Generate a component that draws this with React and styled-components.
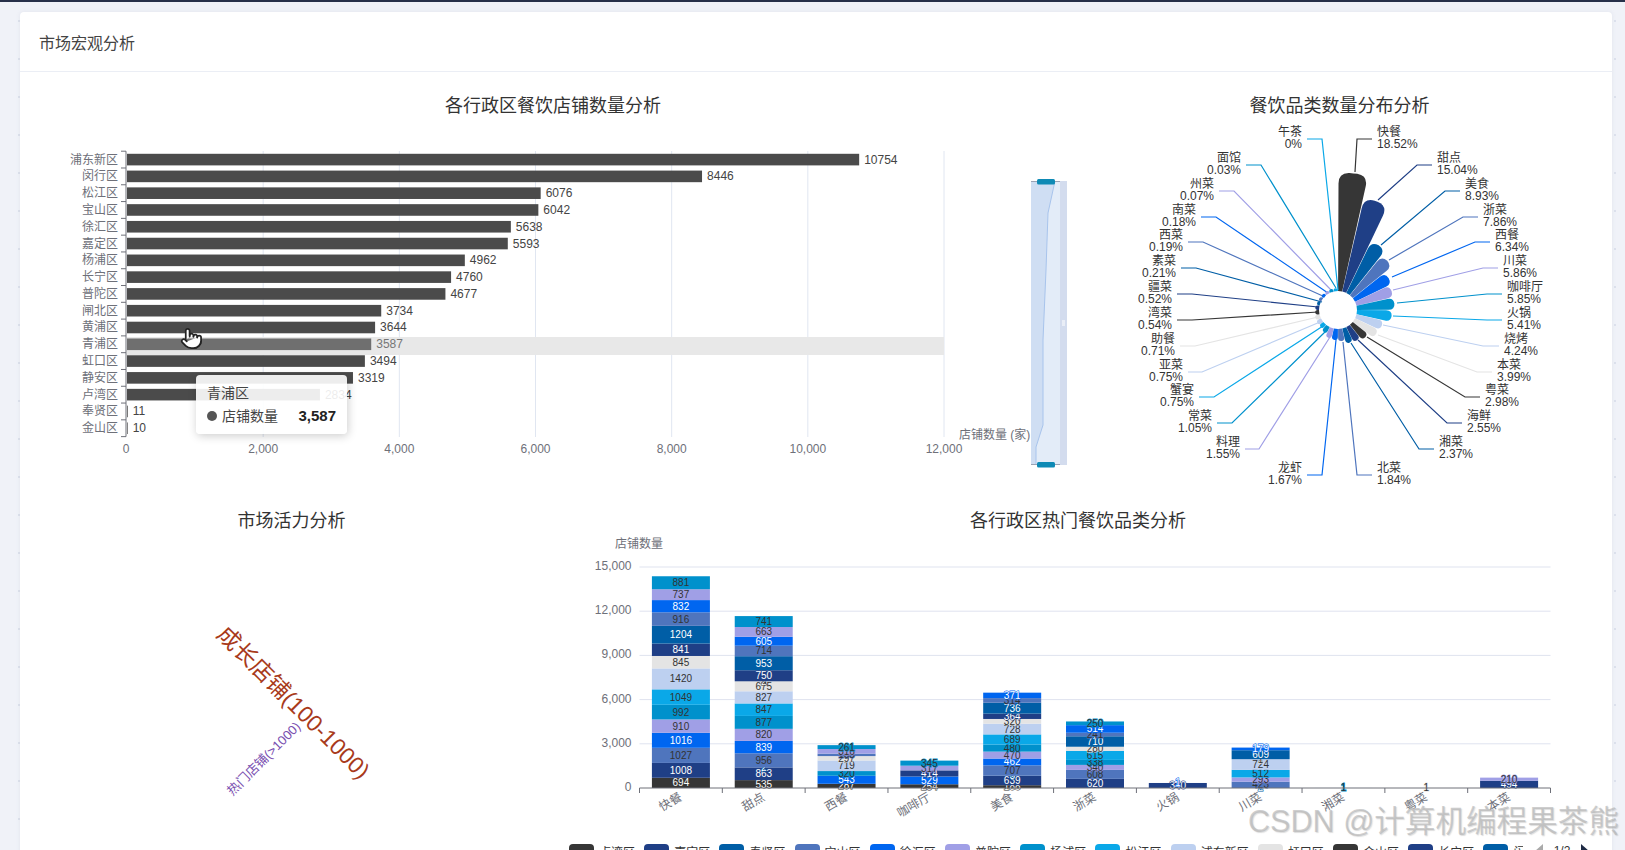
import React from 'react';
import styled, { createGlobalStyle } from 'styled-components';
import { Pointer } from 'lucide-react';

const FONT = '"Liberation Sans", "Noto Sans CJK SC", sans-serif';
const palette = ['#363636', '#1f3f86', '#005ea6', '#4f75bd', '#0066f0', '#a09fe6', '#0091cc', '#0aa8e8', '#bdd0f0', '#e4e4e4'];
const darkSeries = [0, 1, 2, 4];

const GlobalStyle = createGlobalStyle`
  html, body { margin: 0; padding: 0; }
  body { font-family: ${FONT}; color: #333; }
`;
const Page = styled.div`
  position: relative;
  width: 1625px;
  height: 850px;
  overflow: hidden;
  box-sizing: border-box;
  padding: 10px 13px 0 20px;
  border-top: 2px solid #27304a;
  background-color: #f0f2f8;
  background-image: radial-gradient(circle, #dde1ec 1px, transparent 1.5px);
  background-size: 38px 38px;
`;
const Card = styled.div`
  background: #fff;
  border-radius: 4px;
  box-shadow: 0 0 4px rgba(120, 130, 160, 0.12);
`;
const CardHeader = styled.div`
  height: 60px;
  box-sizing: border-box;
  padding: 0 19px;
  display: flex;
  align-items: center;
  font-size: 16px;
  color: #444;
  border-bottom: 1px solid #ebeef5;
`;
const CardBody = styled.div`
  padding: 20px 20px 0 19px;
  display: flex;
  flex-direction: column;
  gap: 20px;
`;
const Row = styled.div`
  display: grid;
  grid-template-columns: ${({ $cols }) => $cols};
  gap: 20px;
`;
const Panel = styled.div`
  position: relative;
  min-width: 0;
`;
const Title = styled.h3`
  margin: 0;
  height: 26px;
  line-height: 28px;
  text-align: center;
  font-size: 18px;
  font-weight: 400;
  color: #333;
`;
const Chart = styled.svg`
  display: block;
  font-family: ${FONT};
`;
const AxisText = styled.text`
  font-size: 12px;
  fill: #6e7079;
`;
const ValueText = styled.text`
  font-size: 12px;
  fill: #444;
`;
const PieText = styled.text`
  font-size: 12px;
  fill: #333;
`;
const StackText = styled.text`
  font-size: 10px;
  paint-order: stroke;
  stroke-width: 1.2px;
`;
const Tip = styled.div`
  position: absolute;
  left: 157px;
  top: 283px;
  width: 151px;
  height: 59px;
  box-sizing: border-box;
  padding: 9px 11px 0 11px;
  background: rgba(255, 255, 255, 0.9);
  border-radius: 4px;
  box-shadow: 1px 2px 10px rgba(0, 0, 0, 0.2);
  font-size: 14px;
  line-height: 18px;
  color: #444;
`;
const TipRow = styled.div`
  display: flex;
  align-items: center;
  margin-top: 5px;
`;
const TipDot = styled.span`
  width: 10px;
  height: 10px;
  border-radius: 50%;
  background: #555;
  margin-right: 5px;
`;
const TipValue = styled.b`
  margin-left: auto;
  font-size: 15px;
  color: #222;
`;
const Hand = styled(Pointer)`
  position: absolute;
  left: 141px;
  top: 235px;
  fill: #fff;
  color: #222;
`;
const Cloud = styled.div`
  position: relative;
  height: 311px;
`;
const Word = styled.span`
  position: absolute;
  left: ${({ $x }) => $x}px;
  top: ${({ $y }) => $y}px;
  font-size: ${({ $size }) => $size}px;
  color: ${({ $color }) => $color};
  white-space: nowrap;
  transform: translate(-50%, -50%) rotate(${({ $angle }) => $angle}deg);
`;
const Legend = styled.div`
  display: flex;
  align-items: center;
  height: 14px;
  padding-left: 5px;
  gap: 9.2px;
  font-size: 12px;
  color: #333;
`;
const LegendItem = styled.div`
  display: flex;
  align-items: center;
  gap: 5px;
  flex: none;
`;
const Swatch = styled.span`
  width: 25px;
  height: 14px;
  border-radius: 4px;
  background: ${({ $color }) => $color};
`;
const LegendName = styled.span`
  white-space: nowrap;
  overflow: hidden;
  max-width: ${({ $clip }) => ($clip ? '10px' : 'none')};
`;
const Pager = styled.div`
  display: flex;
  align-items: center;
  gap: 11px;
  margin-left: 2px;
  flex: none;
`;
const Watermark = styled.div`
  position: absolute;
  left: 1248px;
  top: 799px;
  font-size: 30.6px;
  line-height: 40px;
  white-space: nowrap;
  color: rgba(175, 175, 175, 0.6);
  text-shadow: 1px 1px 1px rgba(120, 120, 120, 0.25);
  pointer-events: none;
`;

const districts = [
  ['浦东新区', 10754], ['闵行区', 8446], ['松江区', 6076], ['宝山区', 6042], ['徐汇区', 5638], ['嘉定区', 5593],
  ['杨浦区', 4962], ['长宁区', 4760], ['普陀区', 4677], ['闸北区', 3734], ['黄浦区', 3644], ['青浦区', 3587],
  ['虹口区', 3494], ['静安区', 3319], ['卢湾区', 2834], ['奉贤区', 11], ['金山区', 10],
];

const BarChart = () => {
  const x0 = 127;
  const k = 817 / 12000;
  const band = 16.79;
  const top = 151.2;
  return (
    <Chart width="1028" height="369" viewBox="39 118 1028 369">
      {[2000, 4000, 6000, 8000, 10000, 12000].map(v => (
        <line key={v} x1={x0 + v * k} x2={x0 + v * k} y1={151} y2={437} stroke="#e0e6f1" />
      ))}
      <rect x={x0} y={337} width={817} height={18} fill="#e8e8e8" />
      {districts.map(([name, v], i) => {
        const cy = top + band * (i + 0.5);
        const active = name === '青浦区';
        return (
          <g key={name}>
            <line x1={121} x2={126} y1={top + band * i} y2={top + band * i} stroke="#6e7079" />
            <AxisText x={118} y={cy} textAnchor="end" dominantBaseline="central">{name}</AxisText>
            <rect x={x0} y={cy - 5.8} width={v * k} height={11.6} fill={active ? '#6f6f6f' : '#4b4b4b'} />
            <ValueText x={x0 + v * k + 5} y={cy} dominantBaseline="central" style={active ? { fill: '#777' } : undefined}>{v}</ValueText>
          </g>
        );
      })}
      <line x1={121} x2={126} y1={top + band * 17} y2={top + band * 17} stroke="#6e7079" />
      <line x1={126} x2={126} y1={top} y2={top + band * 17} stroke="#6e7079" />
      {[0, 2000, 4000, 6000, 8000, 10000, 12000].map(v => (
        <AxisText key={v} x={x0 + v * k - (v ? 0 : 1)} y={449} textAnchor="middle" dominantBaseline="central">{v.toLocaleString('en-US')}</AxisText>
      ))}
      <AxisText x={959} y={435} dominantBaseline="central">店铺数量 (家)</AxisText>

      <rect x={1031} y={181} width={36} height={284} fill="#d3dcee" />
      <rect x={1031} y={181} width={29} height={284} fill="#e3ecf8" />
      <polygon points="1031,181 1055,181 1048,213 1046,270 1043,340 1043,425 1036,447 1036,465 1031,465" fill="#cfdef3" stroke="none" />
      <polyline points="1055,181 1048,213 1046,270 1043,340 1043,425 1036,447 1036,465" fill="none" stroke="#a8c4ec" />
      <line x1={1031} x2={1060} y1={181.5} y2={181.5} stroke="#9aa3b5" />
      <line x1={1031} x2={1060} y1={464.5} y2={464.5} stroke="#9aa3b5" />
      <rect x={1037} y={179} width={18} height={5.5} rx={1.5} fill="#0e8ab5" />
      <rect x={1037} y={462} width={18} height={5.5} rx={1.5} fill="#0e8ab5" />
      <path d="M1062 321h3M1062 323h3M1062 325h3" stroke="#fff" />
    </Chart>
  );
};

const pieData = [
  ['快餐', '18.52%', [1355, 172], [1357, 139], 1372],
  ['甜点', '15.04%', [1378, 200], [1417, 165], 1432],
  ['美食', '8.93%', [1381, 245], [1445, 191], 1460],
  ['浙菜', '7.86%', [1389, 260], [1463, 217], 1478],
  ['西餐', '6.34%', [1392, 277], [1475, 242], 1490],
  ['川菜', '5.86%', [1393, 290], [1483, 268], 1498],
  ['咖啡厅', '5.85%', [1397, 303], [1487, 294], 1502],
  ['火锅', '5.41%', [1393, 316], [1487, 320], 1502],
  ['烧烤', '4.24%', [1383, 325], [1483, 346], 1499],
  ['本菜', '3.99%', [1378, 335], [1477, 372], 1492],
  ['粤菜', '2.98%', [1367, 337], [1465, 397], 1480],
  ['海鲜', '2.55%', [1358, 340], [1447, 423], 1462],
  ['湘菜', '2.37%', [1351, 343], [1419, 449], 1434],
  ['北菜', '1.84%', [1343, 342], [1357, 475], 1372],
  ['龙虾', '1.67%', [1336, 340], [1322, 475], 1307],
  ['料理', '1.55%', [1330, 337], [1259, 449], 1245],
  ['常菜', '1.05%', [1327, 330], [1232, 423], 1217],
  ['蟹宴', '0.75%', [1323, 326], [1214, 397], 1199],
  ['亚菜', '0.75%', [1320, 322], [1202, 372], 1188],
  ['助餐', '0.71%', [1318, 317], [1195, 346], 1180],
  ['湾菜', '0.54%', [1318, 312], [1192, 320], 1177],
  ['疆菜', '0.52%', [1318, 307], [1192, 294], 1177],
  ['素菜', '0.21%', [1322, 302], [1196, 268], 1181],
  ['西菜', '0.19%', [1325, 297], [1203, 242], 1188],
  ['南菜', '0.18%', [1328, 293], [1216, 217], 1201],
  ['州菜', '0.07%', [1333, 292], [1234, 191], 1219],
  ['面馆', '0.03%', [1336, 288], [1261, 165], 1246],
  ['午茶', '0%', [1338, 290], [1322, 139], 1307],
];

const CX = 1338;
const CY = 310;
const R0 = 19;

const polar = (r, a) => [CX + r * Math.sin(a), CY - r * Math.cos(a)];

// wedge with rounded outer corners, the way the rose chart draws them
const wedge = (i, pct) => {
  const step = (2 * Math.PI) / pieData.length;
  const pad = 0.004;
  const a0 = step * i + pad;
  const a1 = step * (i + 1) - pad;
  const r1 = Math.max(R0 + 118 * (pct / 18.52) + 0.5, R0 + 3);
  const half = (r1 * (a1 - a0)) / 2;
  const c = Math.min(11, r1 - R0, half);
  const da = c / r1;
  const pts = {
    innerA: polar(R0, a0),
    sideA: polar(r1 - c, a0),
    cornerA: polar(r1, a0),
    arcA: polar(r1, a0 + da),
    arcB: polar(r1, a1 - da),
    cornerB: polar(r1, a1),
    sideB: polar(r1 - c, a1),
    innerB: polar(R0, a1),
  };
  const p = q => q.map(n => n.toFixed(2)).join(' ');
  return `M${p(pts.innerA)}L${p(pts.sideA)}Q${p(pts.cornerA)} ${p(pts.arcA)}A${r1} ${r1} 0 0 1 ${p(pts.arcB)}Q${p(pts.cornerB)} ${p(pts.sideB)}L${p(pts.innerB)}Z`;
};

const RoseChart = () => (
  <Chart width="505" height="369" viewBox="1087 118 505 369">
    {pieData.map(([name, pct, from, elbow, end], i) => {
      const color = palette[i % 10];
      const right = end > elbow[0];
      const tx = right ? end + 5 : end - 5;
      return (
        <g key={name}>
          <polyline
            points={`${from.join(',')} ${elbow.join(',')} ${end},${elbow[1]}`}
            fill="none"
            stroke={color}
            strokeWidth="1.2"
          />
          <path d={wedge(i, parseFloat(pct))} fill={color} />
          <PieText x={tx} y={elbow[1] - 7} textAnchor={right ? 'start' : 'end'} dominantBaseline="central">{name}</PieText>
          <PieText x={tx} y={elbow[1] + 5} textAnchor={right ? 'start' : 'end'} dominantBaseline="central">{pct}</PieText>
        </g>
      );
    })}
  </Chart>
);

// [series index, value] from the bottom of each stack up
const stacks = [
  ['快餐', [[0, 694], [1, 1008], [3, 1027], [4, 1016], [5, 910], [6, 992], [7, 1049], [8, 1420], [9, 845], [11, 841], [12, 1204], [13, 916], [14, 832], [15, 737], [16, 881]]],
  ['甜点', [[0, 535], [1, 863], [2, 2], [3, 956], [4, 839], [5, 820], [6, 877], [7, 847], [8, 827], [9, 675], [10, 2], [11, 750], [12, 953], [13, 714], [14, 605], [15, 663], [16, 741]]],
  ['西餐', [[0, 287], [4, 543], [6, 320], [8, 719], [9, 297], [13, 165], [15, 316], [16, 261]]],
  ['咖啡厅', [[0, 254], [4, 529], [11, 414], [15, 317], [16, 345]]],
  ['美食', [[0, 188], [1, 639], [2, 3], [3, 707], [4, 462], [5, 470], [6, 480], [7, 689], [8, 728], [9, 320], [11, 364], [12, 736], [13, 314], [14, 371]]],
  ['浙菜', [[1, 620], [3, 608], [5, 340], [6, 338], [7, 615], [9, 280], [12, 710], [13, 241], [14, 514], [16, 250]]],
  ['火锅', [[1, 340], [14, 1]]],
  ['川菜', [[2, 2], [3, 423], [5, 293], [7, 512], [8, 724], [9, 1], [12, 609], [14, 179]]],
  ['湘菜', [[6, 1]]],
  ['粤菜', [[9, 1]]],
  ['本菜', [[1, 494], [5, 210]]],
];

const StackChart = () => {
  const x0 = 639.5;
  const w = 911 / 11;
  const base = 788;
  const k = 44.2 / 3000;
  return (
    <Chart width="1028" height="311" viewBox="564 533 1028 311">
      <AxisText x={639} y={544} textAnchor="middle" dominantBaseline="central">店铺数量</AxisText>
      {[0, 3000, 6000, 9000, 12000, 15000].map(v => (
        <g key={v}>
          {v > 0 && <line x1={x0} x2={x0 + 911} y1={base - v * k} y2={base - v * k} stroke="#dfe3ef" />}
          <AxisText x={631.5} y={base - v * k - 1} textAnchor="end" dominantBaseline="central">{v.toLocaleString('en-US')}</AxisText>
        </g>
      ))}
      {stacks.map(([name, parts], i) => {
        const cx = x0 + w * (i + 0.5);
        let y = base;
        return (
          <g key={name}>
            {parts.map(([s, v]) => {
              const h = v * k;
              y -= h;
              const color = palette[s % 10];
              return (
                <g key={s}>
                  <rect x={cx - 29} y={y} width={58} height={h} fill={color} />
                  <StackText
                    x={cx}
                    y={y + h / 2}
                    textAnchor="middle"
                    dominantBaseline="central"
                    fill={darkSeries.includes(s % 10) ? '#fff' : '#333'}
                    stroke={color}
                  >
                    {v}
                  </StackText>
                </g>
              );
            })}
            <AxisText
              x={cx}
              y={796}
              textAnchor="end"
              dominantBaseline="central"
              transform={`rotate(-30 ${cx} 796)`}
            >
              {name}
            </AxisText>
          </g>
        );
      })}
      <line x1={x0} x2={x0 + 911} y1={base} y2={base} stroke="#6e7079" />
      {stacks.map((_, i) => (
        <line key={i} x1={x0 + w * i} x2={x0 + w * i} y1={base} y2={base + 5} stroke="#6e7079" />
      ))}
      <line x1={x0 + 911} x2={x0 + 911} y1={base} y2={base + 5} stroke="#6e7079" />
    </Chart>
  );
};

const legendNames = ['卢湾区', '嘉定区', '奉贤区', '宝山区', '徐汇区', '普陀区', '杨浦区', '松江区', '浦东新区', '虹口区', '金山区', '长宁区', '闵行区'];

const App = () => (
  <Page>
    <GlobalStyle />
    <Card>
      <CardHeader>市场宏观分析</CardHeader>
      <CardBody>
        <Row $cols="1028px 505px">
          <Panel>
            <Title>各行政区餐饮店铺数量分析</Title>
            <BarChart />
            <Tip>
              青浦区
              <TipRow>
                <TipDot />
                店铺数量
                <TipValue>3,587</TipValue>
              </TipRow>
            </Tip>
            <Hand size={23} strokeWidth={1.8} />
          </Panel>
          <Panel>
            <Title>餐饮品类数量分布分析</Title>
            <RoseChart />
          </Panel>
        </Row>
        <Row $cols="505px 1028px">
          <Panel>
            <Title>市场活力分析</Title>
            <Cloud>
              <Word $x={256} $y={168} $size={23} $color="#a83a1a" $angle={45}>成长店铺(100-1000)</Word>
              <Word $x={224} $y={225} $size={13} $color="#7a4fb0" $angle={-45}>热门店铺(&gt;1000)</Word>
            </Cloud>
          </Panel>
          <Panel>
            <Title>各行政区热门餐饮品类分析</Title>
            <StackChart />
            <Legend>
              {legendNames.map((name, i) => (
                <LegendItem key={name}>
                  <Swatch $color={palette[i % 10]} />
                  <LegendName $clip={i === 12}>{name}</LegendName>
                </LegendItem>
              ))}
              <Pager>
                <svg width="8" height="14" viewBox="0 0 8 14"><polygon points="8,0 8,14 0,7" fill="#aaa" /></svg>
                <span>1/2</span>
                <svg width="8" height="14" viewBox="0 0 8 14"><polygon points="0,0 0,14 8,7" fill="#1e2a44" /></svg>
              </Pager>
            </Legend>
          </Panel>
        </Row>
      </CardBody>
    </Card>
    <Watermark>CSDN @计算机编程果茶熊</Watermark>
  </Page>
);

export default App;
